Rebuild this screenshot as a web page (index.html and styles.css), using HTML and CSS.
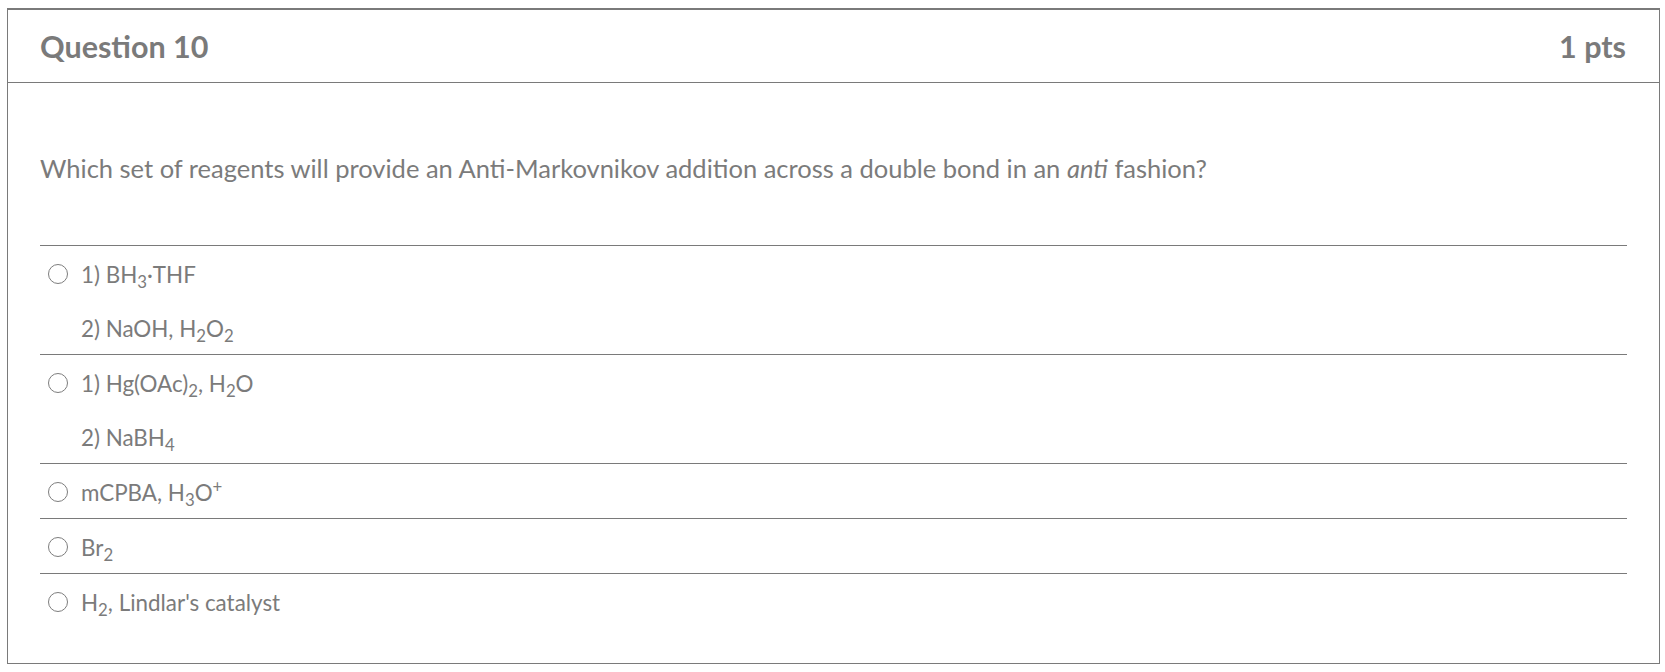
FILE: index.html
```html
<!DOCTYPE html>
<html lang="en">
<head>
<meta charset="utf-8">
<title>Question 10</title>
<link rel="stylesheet" href="styles.css">
</head>
<body>
<div class="question">
  <div class="q-header">
    <span class="q-title">Question 10</span>
    <span class="q-points">1 pts</span>
  </div>
  <div class="q-body">
    <p class="q-text">Which set of reagents will provide an Anti-Markovnikov addition across a double bond in an <em>anti</em> fashion?</p>
    <div class="answers">
      <div class="answer">
        <span class="radio"></span>
        <div class="answer-text">
          <div class="line">1) BH<sub>3</sub>·THF</div>
          <div class="line">2) NaOH, H<sub>2</sub>O<sub>2</sub></div>
        </div>
      </div>
      <div class="answer">
        <span class="radio"></span>
        <div class="answer-text">
          <div class="line">1) Hg(OAc)<sub>2</sub>, H<sub>2</sub>O</div>
          <div class="line">2) NaBH<sub>4</sub></div>
        </div>
      </div>
      <div class="answer">
        <span class="radio"></span>
        <div class="answer-text">
          <div class="line">mCPBA, H<sub>3</sub>O<sup>+</sup></div>
        </div>
      </div>
      <div class="answer">
        <span class="radio"></span>
        <div class="answer-text">
          <div class="line">Br<sub>2</sub></div>
        </div>
      </div>
      <div class="answer">
        <span class="radio"></span>
        <div class="answer-text">
          <div class="line">H<sub>2</sub>, Lindlar's catalyst</div>
        </div>
      </div>
    </div>
  </div>
</div>
</body>
</html>
```
FILE: styles.css
```css
html, body {
  background: #ffffff;
}
body {
  margin: 8px 5px 0 7px;
  font-family: Lato, "Open Sans", "Liberation Sans", sans-serif;
  color: #7b7b7b;
}
.question {
  border: 1px solid #7a7a7a;
  border-top-width: 2px;
}
.q-header {
  display: flex;
  justify-content: space-between;
  align-items: center;
  height: 72px;
  padding: 0 33px 0 32px;
  border-bottom: 1px solid #7a7a7a;
  border-right: 1px solid #7a7a7a;
  margin-right: -1px;
  font-weight: 700;
  font-size: 30.5px;
  color: #7a7a7a;
}
.q-body {
  padding: 0 32px 35px 32px;
}
.q-text {
  margin: 0;
  padding: 69px 0 61px;
  font-size: 25.5px;
  font-weight: 400;
  line-height: 32px;
  color: #7b7b7b;
}
.answer {
  display: flex;
  align-items: flex-start;
  border-top: 1px solid #7a7a7a;
  padding: 14px 0 10px 8px;
}
.radio {
  flex: none;
  width: 18px;
  height: 18px;
  border: 1.5px solid #7d7d7d;
  border-radius: 50%;
  margin-top: 4px;
  margin-right: 13px;
}
.answer-text {
  display: flex;
  flex-direction: column;
  gap: 24px;
  font-size: 22.4px;
  font-weight: 400;
  color: #7b7b7b;
}
.line {
  line-height: 30px;
  height: 30px;
}
sub, sup {
  font-size: 0.75em;
  line-height: 0;
  position: relative;
  vertical-align: baseline;
}
sub {
  top: 0.3em;
}
sup {
  top: -0.45em;
}
```
